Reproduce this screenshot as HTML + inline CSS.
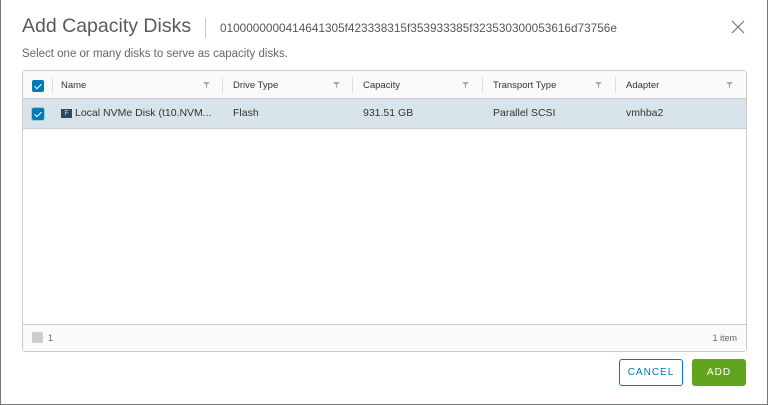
<!DOCTYPE html>
<html><head><style>
*{box-sizing:border-box;margin:0;padding:0}
body{width:768px;height:405px;background:#fff;font-family:"Liberation Sans",sans-serif;color:#565656;position:relative;overflow:hidden}
.frame{position:absolute;left:0;top:0;width:768px;height:405px;border:1px solid #777;border-top:none;}
.title{position:absolute;left:22px;top:15px;font-size:19.5px;color:#5a5a5a}
.sep{position:absolute;left:205px;top:18px;width:1px;height:20px;background:#ccc}
.id{position:absolute;left:220px;top:21px;font-size:11.8px;color:#565656}
.close{position:absolute;left:731px;top:20px;width:14px;height:14px}
.sub{position:absolute;left:22px;top:48px;font-size:11.5px;color:#666}
.grid{position:absolute;left:22px;top:70px;width:725px;height:282px;border:1px solid #ccc;border-radius:3px}
.hdr{position:absolute;left:0;top:0;width:100%;height:28px;background:#fafafa;border-bottom:1px solid #ccc}
.row{position:absolute;left:0;top:28px;width:100%;height:30px;background:#d9e4ea;border-bottom:1px solid #ccc}
.foot{position:absolute;left:0;bottom:0;width:100%;height:27px;background:#fafafa;border-top:1px solid #ccc}
.c{position:absolute;font-size:9.5px;color:#333}
.r{position:absolute;font-size:10.5px;color:#333;top:36px}
.cs{position:absolute;top:6px;width:1px;height:16px;background:#ddd}
.fl{position:absolute;top:11px;width:7px;height:6px}
.cb{position:absolute;width:12px;height:12px;background:#0079b8;border-radius:2px}
.cb:after{content:"";position:absolute;left:4px;top:1.5px;width:3px;height:6px;border:solid #fff;border-width:0 1.5px 1.5px 0;transform:rotate(45deg)}
.btn{position:absolute;top:359px;height:27px;font-size:10px;letter-spacing:1px;text-align:center;line-height:25px;border-radius:3px}
</style></head><body>
<div class="frame"></div>
<div class="title">Add Capacity Disks</div>
<div class="sep"></div>
<div class="id">0100000000414641305f423338315f353933385f323530300053616d73756e</div>
<svg class="close" viewBox="0 0 14 14"><path d="M1 1L13 13M13 1L1 13" stroke="#777" stroke-width="1.2"/></svg>
<div class="sub">Select one or many disks to serve as capacity disks.</div>
<div class="grid">
<div class="hdr"></div>
<div class="row"></div>
<div class="foot"></div>
<div class="cb" style="left:9px;top:9px"></div>
<div class="cb" style="left:9px;top:37px;box-shadow:0 0 0 1px #9cc"></div>
<div class="cs" style="left:29px"></div>
<div class="c" style="left:38px;top:9px">Name</div><svg class="fl" style="left:180px" viewBox="0 0 7 6"><path d="M0 0H7L4 3V6H3V3Z" fill="#aaa"/></svg>
<div class="cs" style="left:199px"></div>
<div class="c" style="left:210px;top:9px">Drive Type</div><svg class="fl" style="left:310px" viewBox="0 0 7 6"><path d="M0 0H7L4 3V6H3V3Z" fill="#aaa"/></svg>
<div class="cs" style="left:329px"></div>
<div class="c" style="left:340px;top:9px">Capacity</div><svg class="fl" style="left:439px" viewBox="0 0 7 6"><path d="M0 0H7L4 3V6H3V3Z" fill="#aaa"/></svg>
<div class="cs" style="left:459px"></div>
<div class="c" style="left:470px;top:9px">Transport Type</div><svg class="fl" style="left:572px" viewBox="0 0 7 6"><path d="M0 0H7L4 3V6H3V3Z" fill="#aaa"/></svg>
<div class="cs" style="left:592px"></div>
<div class="c" style="left:603px;top:9px">Adapter</div><svg class="fl" style="left:703px" viewBox="0 0 7 6"><path d="M0 0H7L4 3V6H3V3Z" fill="#aaa"/></svg>
<div style="position:absolute;left:38px;top:38px;width:11px;height:9px;background:#2d4a5e;color:#ccc;font-size:7px;line-height:9px;text-align:center">F</div>
<div class="r" style="left:52px">Local NVMe Disk (t10.NVM...</div>
<div class="r" style="left:210px">Flash</div>
<div class="r" style="left:340px">931.51 GB</div>
<div class="r" style="left:470px">Parallel SCSI</div>
<div class="r" style="left:603px">vmhba2</div>
<div style="position:absolute;left:9px;top:261px;width:11px;height:11px;background:#ccc;border-radius:2px"></div>
<div class="c" style="left:25px;top:262px;color:#666;font-size:9px">1</div>
<div class="c" style="right:9px;top:262px;color:#666;font-size:9px">1 item</div>
</div>
<div class="btn" style="left:619px;width:64px;border:1px solid #0079b8;color:#0079b8;background:#fff">CANCEL</div>
<div class="btn" style="left:692px;width:54px;background:#62a420;color:#fff;border:1px solid #62a420">ADD</div>
</body></html>
